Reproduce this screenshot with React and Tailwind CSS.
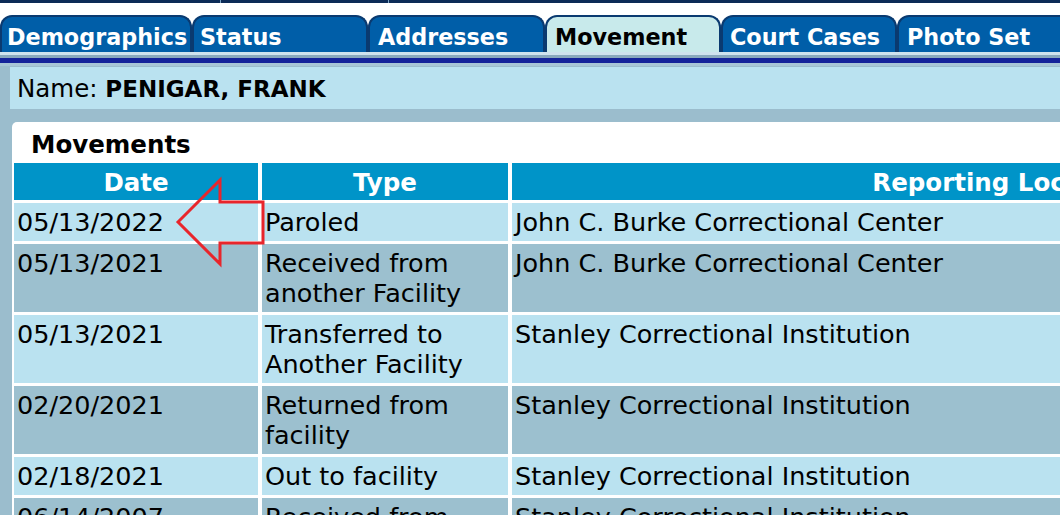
import React from "react";

const tabs = [
  { label: "Demographics", w: "w-[192px]", pad: "pl-[5px]" },
  { label: "Status", w: "w-[176px]", pad: "pl-[6px]" },
  { label: "Addresses", w: "w-[177px]", pad: "pl-[8px]" },
  { label: "Movement", w: "w-[176px]", pad: "pl-[8px]", active: true },
  { label: "Court Cases", w: "w-[176px]", pad: "pl-[7px]" },
  { label: "Photo Set", w: "w-[200px]", pad: "pl-[8px]" },
];

const movements = [
  ["05/13/2022", "Paroled", "John C. Burke Correctional Center"],
  ["05/13/2021", "Received from another Facility", "John C. Burke Correctional Center"],
  ["05/13/2021", "Transferred to Another Facility", "Stanley Correctional Institution"],
  ["02/20/2021", "Returned from facility", "Stanley Correctional Institution"],
  ["02/18/2021", "Out to facility", "Stanley Correctional Institution"],
  ["06/14/2007", "Received from another Facility", "Stanley Correctional Institution"],
];

const Tab = ({ tab }) => (
  <div
    className={`${tab.w} ${tab.pad} shrink-0 h-[37px] flex items-center pt-[5px] rounded-t-[12px] border-2 border-b-0 border-[#0a3a70] text-[22.3px] font-bold leading-none ${
      tab.active ? "bg-[#c8eaeb] text-black" : "bg-[#005ea8] text-white"
    }`}
  >
    {tab.label}
  </div>
);

export default function App() {
  return (
    <div className="relative w-[1060px] h-[515px] overflow-hidden bg-[#9bbdcd] font-['DejaVu_Sans',Verdana,sans-serif]">
      {/* top strip */}
      <div className="flex h-[3px] bg-[#0c2b57]">
        <div className="w-[220px]" />
        <div className="w-px bg-[#7fa6c6]" />
        <div className="w-[167px]" />
        <div className="w-px bg-[#7fa6c6]" />
      </div>
      <div className="h-[12px] bg-white" />

      {/* tabs */}
      <div className="flex bg-white">
        {tabs.map((t) => (
          <Tab key={t.label} tab={t} />
        ))}
      </div>
      <div className="h-[3px] bg-[#cfe3ee]" />
      <div className="h-[3px] bg-[#89a9bd]" />
      <div className="h-[5px] bg-[#14239a]" />
      <div className="h-[3px] bg-[#a8c6d6]" />

      <div className="pt-px pl-[10px]">
        <div className="h-[42px] bg-[#bae2f0] flex items-center pt-[2px] pl-[7px] text-[24.5px] text-black">
          <span>Name:&nbsp;</span>
          <span className="font-bold text-[23px]">PENIGAR, FRANK</span>
        </div>

        <div className="mt-[13px] ml-[2px] bg-white rounded-tl-[5px] pl-[2px]">
          <div className="h-[41px] flex items-end pb-[6px] pl-[17px] text-[24.5px] font-bold text-black leading-none">
            Movements
          </div>
          <div className="grid grid-cols-[244px_246px_984px] gap-x-[4px] gap-y-[3px] text-[25.5px] text-black">
            {["Date", "Type", "Reporting Location"].map((h) => (
              <div key={h} className="h-[37px] pt-[3px] bg-[#0094c8] text-white font-bold text-[24.5px] flex items-center justify-center">
                {h}
              </div>
            ))}
            {movements.map((row, i) =>
              row.map((cell, j) => (
                <div
                  key={`${i}-${j}`}
                  className={`pl-[3px] pr-[4px] pt-[4px] pb-[4px] leading-[30px] ${
                    i % 2 === 0 ? "bg-[#bae2f0]" : "bg-[#9cc0cf]"
                  }`}
                >
                  {cell}
                </div>
              ))
            )}
          </div>
        </div>
      </div>

      {/* red arrow annotation */}
      <svg className="absolute left-0 top-0 pointer-events-none" width="1060" height="515">
        <polygon
          points="178,222 220,180 220,202 263,202 263,243 220,243 220,264"
          fill="none"
          stroke="#e8252b"
          strokeWidth="3"
          strokeLinejoin="miter"
        />
      </svg>
    </div>
  );
}
